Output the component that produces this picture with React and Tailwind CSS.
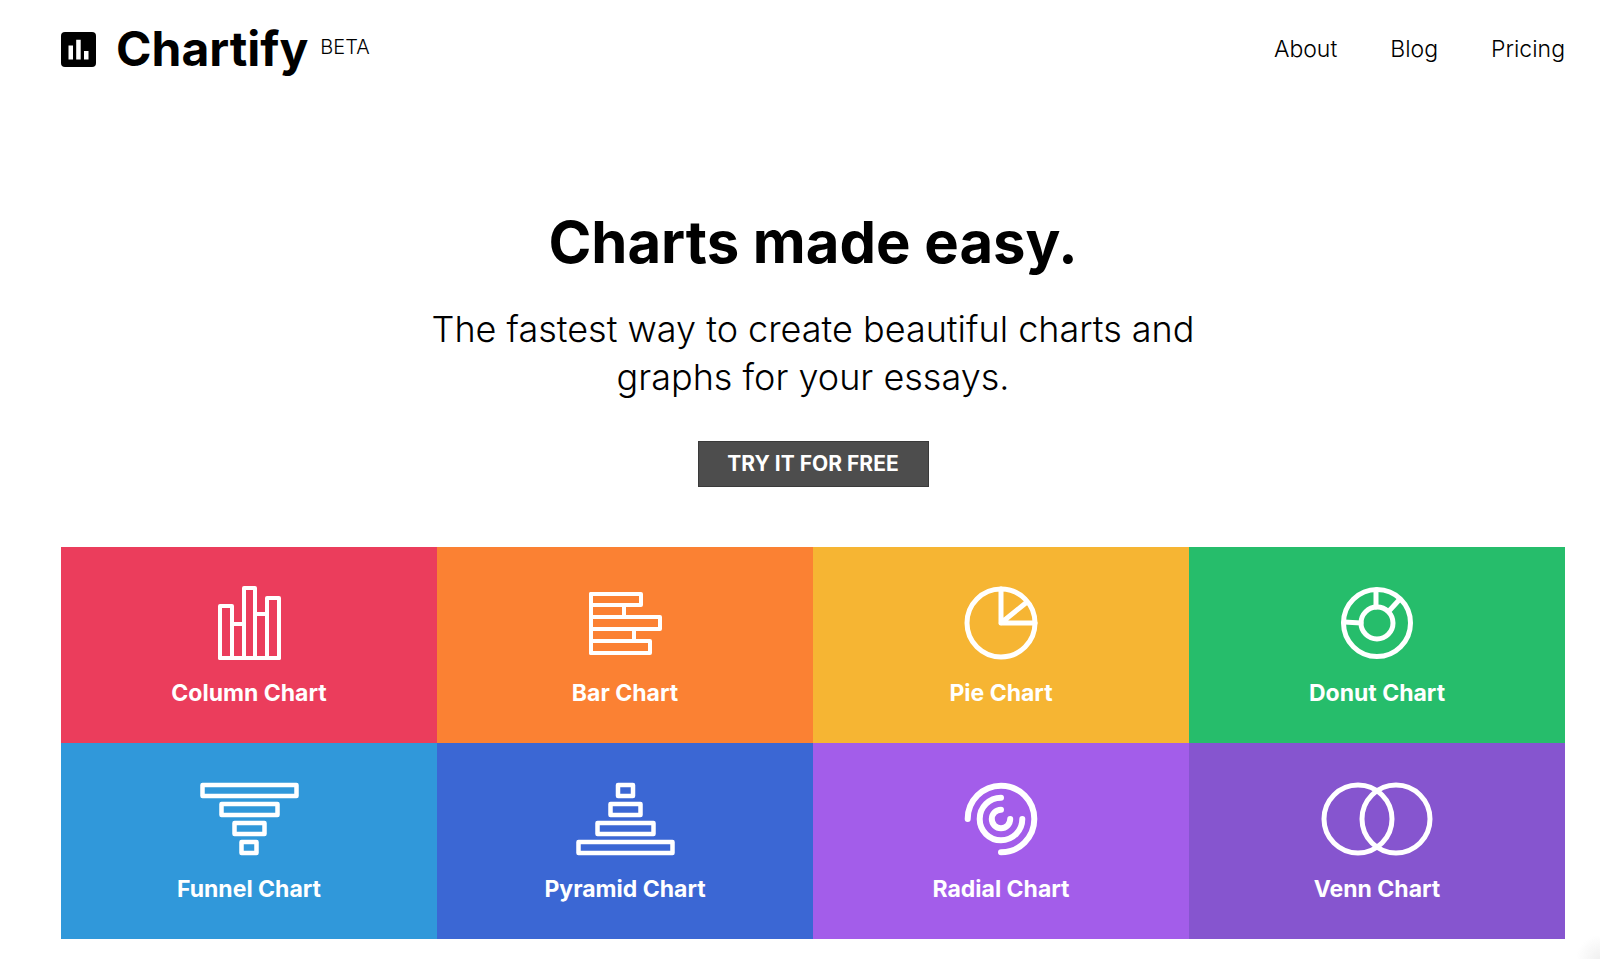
const navLinks = ["About", "Blog", "Pricing"];

const ColumnIcon = () => (
  <g strokeWidth="4">
    <path d="M27 73V21h12v52M51 73V3h11v70M74 73V13h12v60z" />
    <path d="M27 73h59M39 39h12M62 29h12" />
  </g>
);

const BarIcon = () => (
  <g strokeWidth="4">
    <path d="M22 9h50v11H22M22 32h69v12H22M22 56h59v12H22z" />
    <path d="M22 9v59M55 20v12M65 44v12" />
  </g>
);

const PieIcon = () => (
  <g strokeWidth="5">
    <circle cx="56" cy="38" r="34" />
    <path d="M56 4v34h34M56 38l26-21" />
  </g>
);

const DonutIcon = () => (
  <g strokeWidth="5">
    <circle cx="56" cy="38" r="33.5" />
    <circle cx="56" cy="38" r="16" />
    <path d="M55 5v17M68 26l11-12M23 37l17 1" />
  </g>
);

const FunnelIcon = () => (
  <g strokeWidth="4.5">
    <rect x="9.5" y="4" width="94" height="11" />
    <rect x="28.5" y="23" width="56" height="11" />
    <rect x="41.5" y="42" width="30" height="11" />
    <rect x="48.5" y="61" width="15" height="11" />
  </g>
);

const PyramidIcon = () => (
  <g strokeWidth="4.5">
    <rect x="49" y="4" width="15" height="11" />
    <rect x="41.5" y="23" width="30" height="11" />
    <rect x="28.5" y="42" width="56" height="11" />
    <rect x="9.5" y="61" width="94" height="11" />
  </g>
);

const RadialIcon = () => (
  <g strokeWidth="6">
    <path d="M22.700 38A33.300 33.300 0 1 1 56 71.300" />
    <path d="M56 16.700A21.300 21.300 0 1 0 77.300 38" />
    <path d="M56 28.800A9.200 9.200 0 1 0 65.200 38" />
  </g>
);

const VennIcon = () => (
  <g strokeWidth="5">
    <circle cx="37" cy="38" r="34" />
    <circle cx="75" cy="38" r="34" />
  </g>
);

const charts = [
  { label: "Column Chart", color: "bg-[#eb3d5c]", Icon: ColumnIcon },
  { label: "Bar Chart", color: "bg-[#fb8133]", Icon: BarIcon },
  { label: "Pie Chart", color: "bg-[#f6b533]", Icon: PieIcon },
  { label: "Donut Chart", color: "bg-[#26bd6b]", Icon: DonutIcon },
  { label: "Funnel Chart", color: "bg-[#3098da]", Icon: FunnelIcon },
  { label: "Pyramid Chart", color: "bg-[#3b67d4]", Icon: PyramidIcon },
  { label: "Radial Chart", color: "bg-[#a35dea]", Icon: RadialIcon },
  { label: "Venn Chart", color: "bg-[#8655cf]", Icon: VennIcon },
];

const Logo = () => (
  <svg viewBox="0 0 35 35" className="size-[35px]" aria-hidden="true">
    <rect width="35" height="35" rx="4" fill="#000" />
    <path d="M7.500 13.500h4.500v14H7.500zM15.200 7.700h4.500v19.800h-4.500zM23 19h4.500v8.500H23z" fill="#fff" />
  </svg>
);

const Header = () => (
  <header className="flex h-[98px] items-center justify-between">
    <a href="#" className="flex items-center">
      <Logo />
      <span className="ml-5 text-[48px] font-bold leading-none">Chartify</span>
      <span className="ml-3 pb-1 text-[20px] font-light leading-6">BETA</span>
    </a>
    <nav className="flex gap-[53px]">
      {navLinks.map((link) => (
        <a key={link} href="#" className="text-[23px] font-light">
          {link}
        </a>
      ))}
    </nav>
  </header>
);

const Hero = () => (
  <section className="flex flex-col items-center pt-[109px] pb-[60px] text-center">
    <h1 className="text-[58px] font-bold leading-[70px]">Charts made easy.</h1>
    <p className="mt-[28px] max-w-[820px] text-[36px] font-light leading-[48px]">
      The fastest way to create beautiful charts and graphs for your essays.
    </p>
    <button
      type="button"
      className="mt-[40px] h-[46px] w-[231px] border border-[#3a3a3a] bg-[#4d4d4d] text-[21px] font-bold text-white"
    >
      TRY IT FOR FREE
    </button>
  </section>
);

const ChartTile = ({ label, color, Icon }) => (
  <a
    href="#"
    className={`flex h-[196px] flex-col items-center pt-[38px] text-white ${color}`}
  >
    <svg
      viewBox="0 0 112 76"
      className="h-[76px] w-28"
      fill="none"
      stroke="currentColor"
      strokeLinecap="round"
      strokeLinejoin="round"
      aria-hidden="true"
    >
      <Icon />
    </svg>
    <span className="mt-4 text-[23px] font-bold leading-8">{label}</span>
  </a>
);

export default function App() {
  return (
    <div className="bg-white pr-[35px] pl-[61px] font-['Inter',sans-serif] text-black">
      <Header />
      <main>
        <Hero />
        <section className="grid grid-cols-4">
          {charts.map((chart) => (
            <ChartTile key={chart.label} {...chart} />
          ))}
        </section>
      </main>
      <div className="pointer-events-none fixed right-0 bottom-0 size-6 bg-radial-[at_100%_100%] from-[#f0f0f0] to-transparent to-70%" />
    </div>
  );
}
